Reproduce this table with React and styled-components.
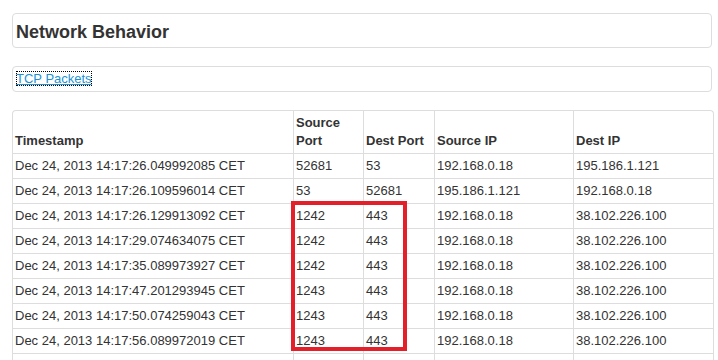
import React from 'react';
import styled, { createGlobalStyle } from 'styled-components';

const GlobalStyle = createGlobalStyle`
  html, body {
    margin: 0;
    padding: 0;
    background: #fff;
  }
  body {
    font-family: "Liberation Sans", Arial, sans-serif;
    font-size: 13px;
    line-height: 16px;
    color: #333;
  }
`;

const Page = styled.div`
  width: 700px;
  padding: 13px 0 0 12px;
  display: flex;
  flex-direction: column;
  gap: 18px;
`;

const Panel = styled.div`
  border: 1px solid #ddd;
  border-radius: 4px;
  padding: ${(p) => p.$pad};
  line-height: ${(p) => p.$lh};
`;

const Heading = styled.h2`
  margin: 0;
  font-size: 18px;
  line-height: 20px;
  font-weight: bold;
  color: #333;
`;

const TabLink = styled.a`
  font-size: 13px;
  line-height: 16px;
  color: #1a93d6;
  text-decoration: underline;
  outline: 1px dotted #000;
  outline-offset: -1px;
  cursor: pointer;
`;

const TableWrap = styled.div`
  position: relative;
`;

const Table = styled.table`
  width: 700px;
  border-collapse: separate;
  border-spacing: 0;
  border: 1px solid #ddd;
  border-bottom: none;
  border-radius: 4px 4px 0 0;
  table-layout: fixed;
  font-size: 13px;
  line-height: 18px;
`;

const Th = styled.th`
  text-align: left;
  vertical-align: bottom;
  font-weight: bold;
  padding: 3px 2px;
  border-left: ${(p) => (p.$first ? 'none' : '1px solid #ddd')};
  color: #333;
`;

const Td = styled.td`
  padding: 3px 2px;
  border-top: 1px solid #ddd;
  border-left: ${(p) => (p.$first ? 'none' : '1px solid #ddd')};
  white-space: nowrap;
  color: #333;
`;

const Highlight = styled.div`
  position: absolute;
  left: 279px;
  top: 91px;
  width: 116px;
  height: 150px;
  box-sizing: border-box;
  border: 4px solid #e3202a;
  pointer-events: none;
`;

const columns = [
  { label: 'Timestamp', width: 280 },
  { label: <>Source<br />Port</>, width: 70 },
  { label: 'Dest Port', width: 71 },
  { label: 'Source IP', width: 139 },
  { label: 'Dest IP', width: 140 },
];

const packets = [
  ['Dec 24, 2013 14:17:26.049992085 CET', '52681', '53', '192.168.0.18', '195.186.1.121'],
  ['Dec 24, 2013 14:17:26.109596014 CET', '53', '52681', '195.186.1.121', '192.168.0.18'],
  ['Dec 24, 2013 14:17:26.129913092 CET', '1242', '443', '192.168.0.18', '38.102.226.100'],
  ['Dec 24, 2013 14:17:29.074634075 CET', '1242', '443', '192.168.0.18', '38.102.226.100'],
  ['Dec 24, 2013 14:17:35.089973927 CET', '1242', '443', '192.168.0.18', '38.102.226.100'],
  ['Dec 24, 2013 14:17:47.201293945 CET', '1243', '443', '192.168.0.18', '38.102.226.100'],
  ['Dec 24, 2013 14:17:50.074259043 CET', '1243', '443', '192.168.0.18', '38.102.226.100'],
  ['Dec 24, 2013 14:17:56.089972019 CET', '1243', '443', '192.168.0.18', '38.102.226.100'],
  ['\u00a0', '\u00a0', '\u00a0', '\u00a0', '\u00a0'],
];

const App = () => (
  <>
    <GlobalStyle />
    <Page>
      <Panel $pad="8px 3px 5px" $lh="20px">
        <Heading>Network Behavior</Heading>
      </Panel>
      <Panel $pad="4px 3px 4px" $lh="16px">
        <TabLink>TCP Packets</TabLink>
      </Panel>
      <TableWrap>
        <Table>
          <colgroup>
            {columns.map((c, i) => (
              <col key={i} style={{ width: c.width }} />
            ))}
          </colgroup>
          <thead>
            <tr>
              {columns.map((c, i) => (
                <Th key={i} $first={i === 0}>{c.label}</Th>
              ))}
            </tr>
          </thead>
          <tbody>
            {packets.map((row, r) => (
              <tr key={r}>
                {row.map((cell, i) => (
                  <Td key={i} $first={i === 0}>{cell}</Td>
                ))}
              </tr>
            ))}
          </tbody>
        </Table>
        <Highlight />
      </TableWrap>
    </Page>
  </>
);

export default App;
